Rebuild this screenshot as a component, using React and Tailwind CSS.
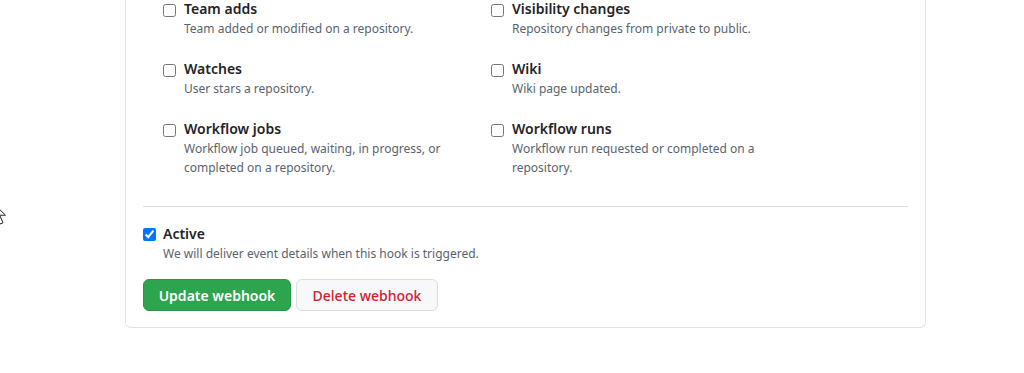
import React from "react";

const events = [
  ["Team adds", "Team added or modified on a repository."],
  ["Visibility changes", "Repository changes from private to public."],
  ["Watches", "User stars a repository."],
  ["Wiki", "Wiki page updated."],
  ["Workflow jobs", "Workflow job queued, waiting, in progress, or completed on a repository."],
  ["Workflow runs", "Workflow run requested or completed on a repository."],
];

const EventItem = ({ label, hint }) => (
  <label className="flex items-start">
    <input type="checkbox" className="mt-[5px] w-[13px] h-[13px] shrink-0" />
    <div className="ml-[8px]">
      <div className="text-[14px] leading-[20px] font-semibold text-[#1f2328]">{label}</div>
      <p className="text-[12px] leading-[19px] text-[#59636e] w-[290px]">{hint}</p>
    </div>
  </label>
);

const Cursor = () => (
  <svg className="absolute left-[-9px] top-[201px]" width="20" height="28" viewBox="0 0 20 28">
    <path
      d="M1 1 L1 19 L5.5 15 L9 23 L12 21.8 L8.6 14.2 L14.5 14.2 Z"
      fill="#fff"
      stroke="#222"
      strokeWidth="1"
      strokeLinejoin="miter"
    />
  </svg>
);

export default function App() {
  return (
    <div
      className="relative w-[1024px] h-[373px] overflow-hidden bg-white"
      style={{ fontFamily: '"Noto Sans", "Segoe UI", sans-serif' }}
    >
      <Cursor />
      <div className="ml-[125px] w-[801px] border border-t-0 border-[#dfe3e8] rounded-b-md px-[17px] pb-[16px]">
        <div className="ml-[20px] -mt-[1px] grid grid-cols-[328px_328px] gap-y-[21px]">
          {events.map(([label, hint]) => (
            <EventItem key={label} label={label} hint={hint} />
          ))}
        </div>

        <hr className="mt-[29px] border-0 border-t border-[#d8dee4]" />

        <label className="mt-[17px] flex items-start">
          <input
            type="checkbox"
            defaultChecked
            className="mt-[4px] w-[13px] h-[13px] shrink-0 accent-[#0075ff]"
          />
          <div className="ml-[7px]">
            <div className="text-[14px] leading-[20px] font-semibold text-[#1f2328]">Active</div>
            <p className="text-[12px] leading-[19px] text-[#59636e]">
              We will deliver event details when this hook is triggered.
            </p>
          </div>
        </label>

        <div className="mt-[16px] flex gap-[5px]">
          <button className="w-[148px] h-[32px] rounded-md bg-[#2da44e] border border-[#2a9447] text-white text-[14px] font-semibold">
            Update webhook
          </button>
          <button className="w-[142px] h-[32px] rounded-md bg-[#f6f8fa] border border-[#d8dee4] text-[#cf222e] text-[14px] font-medium">
            Delete webhook
          </button>
        </div>
      </div>
    </div>
  );
}
